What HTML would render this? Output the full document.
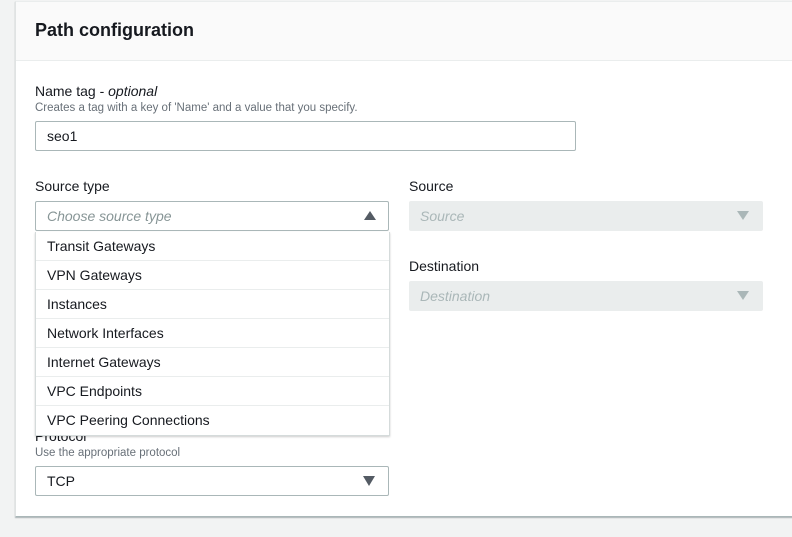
<!DOCTYPE html>
<html><head><style>
*{margin:0;padding:0;box-sizing:border-box}
body{width:792px;height:537px;background:#f2f3f3;font-family:"Liberation Sans",Arial,sans-serif;color:#16191f;position:relative;overflow:hidden}
.card{position:absolute;left:15px;top:1px;width:800px;height:516px;background:#fff;border-top:1px solid #eaeded;border-left:1px solid #e0e3e3;border-bottom:1px solid #aab7b8;box-shadow:0 1px 1px rgba(0,28,36,.3)}
.hdr{position:absolute;left:0;top:0;right:0;height:59px;background:#fafafa;border-bottom:1px solid #eaeded}
.abs{position:absolute;white-space:nowrap}
.h{font-size:18px;font-weight:bold;left:35px;top:20px}
.lbl{font-size:14px}
.desc{font-size:11.5px;color:#687078}
.inp{position:absolute;border:1px solid #aab7b8;border-radius:2px;background:#fff;font-size:14px;padding-left:11px;line-height:28px}
.dis{position:absolute;background:#eaeded;border-radius:2px;font-size:14px;font-style:italic;color:#aab7b8;padding-left:11px;line-height:30px}
.tri{position:absolute;width:0;height:0;border-left:6px solid transparent;border-right:6px solid transparent}
.dd{position:absolute;left:35px;top:232px;width:355px;height:204px;background:#fff;border:1px solid #d5dbdb;border-top:none;box-shadow:0 1px 2px rgba(0,0,0,.2)}
.dd div{height:29px;line-height:29px;padding-left:11px;font-size:14px;border-bottom:1px solid #eaeded}
.dd div:last-child{border-bottom:none}
</style></head><body>
<div class="card"><div class="hdr"></div></div>
<div class="abs h">Path configuration</div>
<div class="abs lbl" style="left:35px;top:83px">Name tag - <i>optional</i></div>
<div class="abs desc" style="left:35px;top:102px">Creates a tag with a key of 'Name' and a value that you specify.</div>
<div class="inp" style="left:35px;top:121px;width:541px;height:30px">seo1</div>
<div class="abs lbl" style="left:35px;top:178px">Source type</div>
<div class="inp" style="left:35px;top:201px;width:354px;height:30px;color:#879596;font-style:italic">Choose source type</div>
<div class="tri" style="left:364px;top:211px;border-bottom:9px solid #545b64"></div>
<div class="abs lbl" style="left:409px;top:178px">Source</div>
<div class="dis" style="left:409px;top:201px;width:354px;height:30px">Source</div>
<div class="tri" style="left:737px;top:211px;border-top:9px solid #aab7b8"></div>
<div class="abs lbl" style="left:409px;top:258px">Destination</div>
<div class="dis" style="left:409px;top:281px;width:354px;height:30px">Destination</div>
<div class="tri" style="left:737px;top:291px;border-top:9px solid #aab7b8"></div>
<div class="abs lbl" style="left:35px;top:428px">Protocol</div>
<div class="abs desc" style="left:35px;top:447px">Use the appropriate protocol</div>
<div class="inp" style="left:35px;top:466px;width:354px;height:30px">TCP</div>
<div class="tri" style="left:363px;top:476px;border-top:10px solid #545b64"></div>
<div class="dd">
<div>Transit Gateways</div><div>VPN Gateways</div><div>Instances</div><div>Network Interfaces</div><div>Internet Gateways</div><div>VPC Endpoints</div><div>VPC Peering Connections</div>
</div>
</body></html>
